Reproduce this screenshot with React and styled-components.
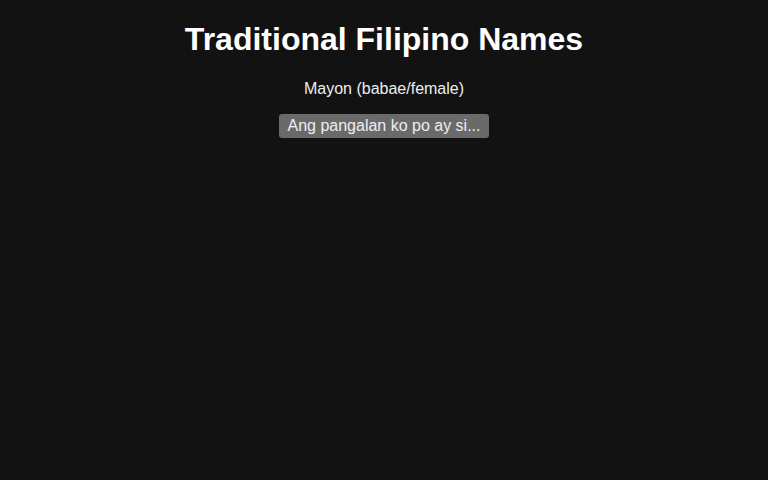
import React from "react";
import styled, { createGlobalStyle } from "styled-components";

const GlobalStyle = createGlobalStyle`
  html, body {
    margin: 0;
    padding: 0;
    background: #121212;
  }
  body {
    font-family: "Liberation Sans", Arial, sans-serif;
    color: #ffffff;
  }
`;

const Page = styled.main`
  display: flex;
  flex-direction: column;
  align-items: center;
  text-align: center;
  padding-top: 21.44px;
`;

const Title = styled.h1`
  margin: 0 0 21.44px;
  font-size: 32px;
  font-weight: bold;
  color: #ffffff;
`;

const NameLine = styled.p`
  margin: 0 0 16px;
  font-size: 16px;
  color: #eeeeee;
`;

const RevealButton = styled.button`
  font-family: "Liberation Sans", Arial, sans-serif;
  font-size: 16px;
  line-height: 18px;
  padding: 3px 8px;
  border: none;
  border-radius: 3px;
  background: #6a6a6a;
  color: #eeeeee;
  cursor: pointer;
`;

export default function App() {
  return (
    <>
      <GlobalStyle />
      <Page>
        <Title>Traditional Filipino Names</Title>
        <NameLine>Mayon (babae/female)</NameLine>
        <RevealButton>Ang pangalan ko po ay si...</RevealButton>
      </Page>
    </>
  );
}
